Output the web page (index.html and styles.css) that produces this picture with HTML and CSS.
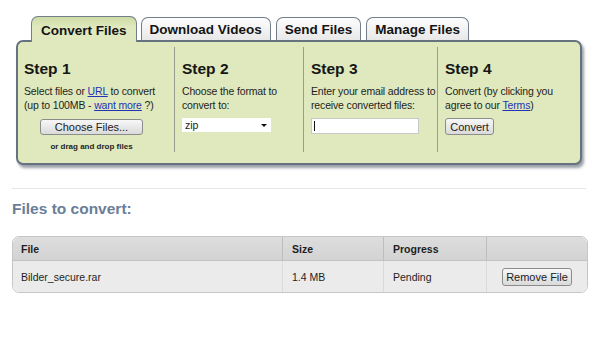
FILE: index.html
```html
<html lang="en"><head>
  <meta charset="UTF-8">
  <meta name="viewport" content="width=device-width, initial-scale=1.0">
  <title>Convert Files</title>
  <link rel="stylesheet" href="styles.css">
</head>
<body>
  <div class="page">
    <ul class="tabs">
      <li class="tab active">Convert Files</li>
      <li class="tab">Download Videos</li>
      <li class="tab">Send Files</li>
      <li class="tab">Manage Files</li>
    </ul>

    <div class="panel">
      <div class="step">
        <div class="step-title">Step 1</div>
        <p>Select files or <a href="#">URL</a> to convert<br>(up to 100MB - <a href="#">want more</a> ?)</p>
        <div class="upload">
          <button class="btn btn-choose">Choose Files...</button>
          <div class="drop-hint">or drag and drop files</div>
        </div>
      </div>
      <div class="step">
        <div class="step-title">Step 2</div>
        <p>Choose the format to<br>convert to:</p>
        <div class="format-select">
          <span>zip</span>
          <span class="arrow"></span>
        </div>
      </div>
      <div class="step">
        <div class="step-title">Step 3</div>
        <p>Enter your email address to<br>receive converted files:</p>
        <div class="email-input"><span class="caret"></span></div>
      </div>
      <div class="step">
        <div class="step-title">Step 4</div>
        <p>Convert (by clicking you<br>agree to our <a href="#">Terms</a>)</p>
        <button class="btn btn-convert">Convert</button>
      </div>
    </div>

    <div class="divider"></div>

    <h2 class="files-title">Files to convert:</h2>

    <div class="file-table">
      <div class="row head">
        <div class="cell">File</div>
        <div class="cell">Size</div>
        <div class="cell">Progress</div>
        <div class="cell"></div>
      </div>
      <div class="row">
        <div class="cell">Bilder_secure.rar</div>
        <div class="cell">1.4 MB</div>
        <div class="cell">Pending</div>
        <div class="cell action"><button class="btn btn-remove">Remove File</button></div>
      </div>
    </div>
  </div>
</body></html>
```

FILE: styles.css
```css
body {
  margin: 0;
  font-family: "Liberation Sans", Arial, sans-serif;
  color: #1e1e1e;
  background: #fff;
}

.page {
  padding: 16px 6px 0 12px;
}

.tabs {
  list-style: none;
  margin: 0 0 0 19px;
  padding: 0;
  display: flex;
  gap: 5px;
  align-items: flex-end;
  position: relative;
  z-index: 2;
}

.tab {
  height: 22px;
  line-height: 23px;
  padding: 0 8px;
  font-size: 13.5px;
  font-weight: bold;
  color: #141414;
  border: 1.5px solid #727e8b;
  border-bottom: none;
  border-radius: 7px 7px 0 0;
  background: linear-gradient(#fdfdfd, #e8e8e8);
}

.tab.active {
  height: 25px;
  line-height: 27px;
  padding: 0 9px;
  margin-right: -1px;
  margin-bottom: -2px;
  background: linear-gradient(#cddba6, #dfe9bd 40%);
}

.panel {
  margin-left: 4px;
  width: 562px;
  height: 105px;
  border: 2px solid #66727f;
  border-radius: 7px;
  background: #dfe9bd;
  box-shadow: 2px 3px 3px rgba(70, 80, 95, 0.55);
  display: grid;
  grid-template-columns: 156px 129px 134px 1fr;
  padding: 5px 0 11px;
  box-sizing: content-box;
  position: relative;
  z-index: 1;
}

.step {
  padding: 13px 6px 0 7px;
  border-left: 1px solid #979f8c;
  white-space: nowrap;
}

.step:first-child {
  border-left: none;
  padding-left: 6px;
}

.step-title {
  font-size: 15.5px;
  font-weight: bold;
  line-height: 18px;
  margin-bottom: 6px;
  color: #161616;
}

.step p {
  margin: 0;
  font-size: 10.5px;
  line-height: 14px;
  letter-spacing: -0.15px;
}

.step a {
  color: #2433b5;
}

.upload {
  width: 135px;
  text-align: center;
  margin-top: 7px;
}

.btn {
  font-family: "Liberation Sans", Arial, sans-serif;
  font-size: 11px;
  color: #222;
  border: 1px solid #8c8c8c;
  border-radius: 3px;
  background: linear-gradient(#f7f7f7, #dadada);
  padding: 0;
  height: 16px;
}

.btn-choose {
  width: 103px;
}

.drop-hint {
  font-size: 8px;
  font-weight: bold;
  margin-top: 7px;
}

.format-select {
  margin-top: 6px;
  width: 89px;
  height: 14px;
  background: #fff;
  font-size: 10.5px;
  line-height: 14px;
  display: flex;
  justify-content: space-between;
  align-items: center;
  padding: 0 4px 0 3px;
  box-sizing: border-box;
}

.arrow {
  width: 0;
  height: 0;
  border-left: 3px solid transparent;
  border-right: 3px solid transparent;
  border-top: 3px solid #111;
}

.email-input {
  margin-top: 6px;
  width: 108px;
  height: 16px;
  background: #fff;
  border: 1px solid #c9c9c9;
  box-sizing: border-box;
  padding: 2px 0 0 2px;
}

.caret {
  display: block;
  width: 1px;
  height: 10px;
  background: #111;
}

.btn-convert {
  margin-top: 6px;
  width: 49px;
  height: 17px;
}

.divider {
  height: 1px;
  background: #e6e6e6;
  margin: 23px 0 0 0;
}

.files-title {
  margin: 11px 0 0 0;
  font-size: 15.5px;
  line-height: 18px;
  font-weight: bold;
  color: #6a7e97;
}

.file-table {
  margin-top: 18px;
  width: 574px;
  border: 1px solid #c6c6c6;
  border-radius: 7px;
  overflow: hidden;
}

.row {
  display: grid;
  grid-template-columns: 269px 101px 103px 1fr;
  background: #ebebeb;
  height: 31px;
  align-items: stretch;
}

.row.head {
  background: linear-gradient(#dddddd, #d3d3d3);
  height: 23px;
  border-bottom: 1px solid #c2c2c2;
  font-weight: bold;
}

.cell {
  font-size: 10.5px;
  padding-left: 9px;
  display: flex;
  align-items: center;
  border-left: 1px solid #dadada;
}

.head .cell {
  border-left-color: #bdbdbd;
}

.cell:first-child {
  border-left: none;
  padding-left: 8px;
}

.cell.action {
  justify-content: center;
  padding-left: 0;
}

.btn-remove {
  width: 70px;
  height: 18px;
}
```
